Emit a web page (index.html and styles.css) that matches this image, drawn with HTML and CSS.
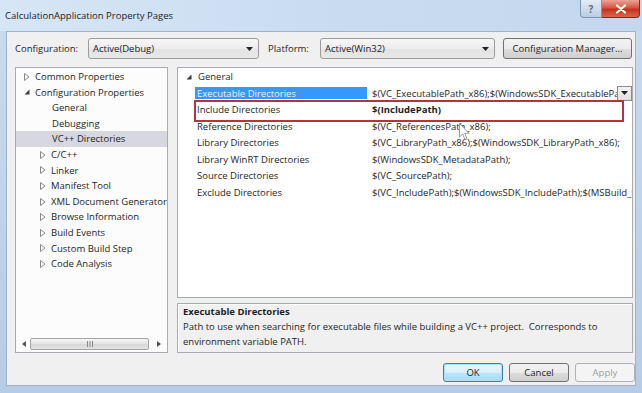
FILE: index.html
```html
<!DOCTYPE html>
<html>
<head>
<meta charset="utf-8">
<link rel="stylesheet" href="styles.css">
</head>
<body>
<div class="window">
  <div class="titlebar">
    <span class="title">CalculationApplication Property Pages</span>
    <div class="caption">
      <span class="cap-help">?</span>
      <span class="cap-close"><svg width="12" height="10" viewBox="0 0 12 10"><path d="M2 1.5 L10 8.5 M10 1.5 L2 8.5" stroke="#fff" stroke-width="2.2" stroke-linecap="round"/></svg></span>
    </div>
  </div>
  <div class="client">
    <div class="config-row">
      <span class="lbl lbl-config">Configuration:</span>
      <div class="combo combo-config"><span>Active(Debug)</span><svg class="dd" width="7" height="4" viewBox="0 0 7 4"><path d="M0 0 H7 L3.5 4 Z" fill="#222"/></svg></div>
      <span class="lbl lbl-platform">Platform:</span>
      <div class="combo combo-platform"><span>Active(Win32)</span><svg class="dd" width="7" height="4" viewBox="0 0 7 4"><path d="M0 0 H7 L3.5 4 Z" fill="#222"/></svg></div>
      <div class="btn btn-cm">Configuration Manager...</div>
    </div>
    <div class="main">
      <div class="tree">
        <div class="tree-items">
          <div class="node lvl0"><svg class="exp" width="6" height="8" viewBox="0 0 6 8"><path d="M0.5 0.5 L5 4 L0.5 7.5 Z" fill="none" stroke="#888" stroke-width="1"/></svg>Common Properties</div>
          <div class="node lvl0"><svg class="exp" width="6" height="8" viewBox="0 0 6 8"><path d="M5.5 1.5 V6.5 H0.5 Z" fill="#3c3c3c"/></svg>Configuration Properties</div>
          <div class="node lvl1">General</div>
          <div class="node lvl1">Debugging</div>
          <div class="node lvl1 sel">VC++ Directories</div>
          <div class="node lvl1x"><svg class="exp" width="6" height="8" viewBox="0 0 6 8"><path d="M0.5 0.5 L5 4 L0.5 7.5 Z" fill="none" stroke="#888" stroke-width="1"/></svg>C/C++</div>
          <div class="node lvl1x"><svg class="exp" width="6" height="8" viewBox="0 0 6 8"><path d="M0.5 0.5 L5 4 L0.5 7.5 Z" fill="none" stroke="#888" stroke-width="1"/></svg>Linker</div>
          <div class="node lvl1x"><svg class="exp" width="6" height="8" viewBox="0 0 6 8"><path d="M0.5 0.5 L5 4 L0.5 7.5 Z" fill="none" stroke="#888" stroke-width="1"/></svg>Manifest Tool</div>
          <div class="node lvl1x"><svg class="exp" width="6" height="8" viewBox="0 0 6 8"><path d="M0.5 0.5 L5 4 L0.5 7.5 Z" fill="none" stroke="#888" stroke-width="1"/></svg>XML Document Generator</div>
          <div class="node lvl1x"><svg class="exp" width="6" height="8" viewBox="0 0 6 8"><path d="M0.5 0.5 L5 4 L0.5 7.5 Z" fill="none" stroke="#888" stroke-width="1"/></svg>Browse Information</div>
          <div class="node lvl1x"><svg class="exp" width="6" height="8" viewBox="0 0 6 8"><path d="M0.5 0.5 L5 4 L0.5 7.5 Z" fill="none" stroke="#888" stroke-width="1"/></svg>Build Events</div>
          <div class="node lvl1x"><svg class="exp" width="6" height="8" viewBox="0 0 6 8"><path d="M0.5 0.5 L5 4 L0.5 7.5 Z" fill="none" stroke="#888" stroke-width="1"/></svg>Custom Build Step</div>
          <div class="node lvl1x"><svg class="exp" width="6" height="8" viewBox="0 0 6 8"><path d="M0.5 0.5 L5 4 L0.5 7.5 Z" fill="none" stroke="#888" stroke-width="1"/></svg>Code Analysis</div>
        </div>
        <div class="hscroll">
          <svg class="sarrow" width="4" height="6" viewBox="0 0 4 6"><path d="M4 0 V6 L0 3 Z" fill="#555"/></svg>
          <div class="thumb"><svg width="8" height="6" viewBox="0 0 8 6"><path d="M1.5 0 V6 M4 0 V6 M6.5 0 V6" stroke="#8a8a8a" stroke-width="1"/></svg></div>
          <svg class="sarrow" width="4" height="6" viewBox="0 0 4 6"><path d="M0 0 V6 L4 3 Z" fill="#555"/></svg>
        </div>
      </div>
      <div class="right">
        <div class="grid">
          <div class="cat"><svg class="exp" width="6" height="8" viewBox="0 0 6 8"><path d="M5.5 1.5 V6.5 H0.5 Z" fill="#3c3c3c"/></svg>General</div>
          <div class="row selrow"><span class="name">Executable Directories</span><span class="val">$(VC_ExecutablePath_x86);$(WindowsSDK_ExecutablePath</span><span class="ddbtn"><svg width="7" height="4" viewBox="0 0 7 4"><path d="M0 0 H7 L3.5 4 Z" fill="#222"/></svg></span></div>
          <div class="row"><span class="name">Include Directories</span><span class="val bold">$(IncludePath)</span></div>
          <div class="row"><span class="name">Reference Directories</span><span class="val">$(VC_ReferencesPath_x86);</span></div>
          <div class="row"><span class="name">Library Directories</span><span class="val">$(VC_LibraryPath_x86);$(WindowsSDK_LibraryPath_x86);</span></div>
          <div class="row"><span class="name">Library WinRT Directories</span><span class="val">$(WindowsSDK_MetadataPath);</span></div>
          <div class="row"><span class="name">Source Directories</span><span class="val">$(VC_SourcePath);</span></div>
          <div class="row"><span class="name">Exclude Directories</span><span class="val">$(VC_IncludePath);$(WindowsSDK_IncludePath);$(MSBuild_Executable</span></div>
          <div class="redbox"></div>
          <svg class="cursor" width="12" height="18" viewBox="0 0 12 18"><path d="M0.5 0.5 V14 L3.6 11 L6 16.5 L8 15.6 L5.7 10.3 H10 Z" fill="#fff" stroke="#9a9a9a" stroke-width="1" stroke-linejoin="round"/></svg>
        </div>
        <div class="desc">
          <div class="desc-title">Executable Directories</div>
          <div class="desc-text">Path to use when searching for executable files while building a VC++ project.&nbsp; Corresponds to environment variable PATH.</div>
        </div>
      </div>
    </div>
    <div class="buttons">
      <div class="btn btn-ok">OK</div>
      <div class="btn">Cancel</div>
      <div class="btn btn-disabled">Apply</div>
    </div>
  </div>
</div>
</body>
</html>
```

FILE: styles.css
```css
* { box-sizing: border-box; }
html, body { margin: 0; padding: 0; }
body {
  font-family: "Open Sans", "Noto Sans", sans-serif;
  font-size: 9.5px;
  color: #1b1b1b;
  background: #b9cfe8;
}
.window {
  width: 642px;
  height: 393px;
  display: flex;
  flex-direction: column;
  background: linear-gradient(to bottom, #c9dbef, #b6cce6);
  overflow: hidden;
}
.titlebar {
  height: 31px;
  display: flex;
  align-items: flex-start;
  background: linear-gradient(to right, #d7e6f6 0%, #c9dcf1 50%, #c3d7ee 100%);
  flex-shrink: 0;
}
.title {
  margin: 9px 0 0 5px;
  font-size: 9.5px;
  color: #222;
}
.caption {
  margin-left: auto;
  display: flex;
  margin-right: 2px;
  flex-shrink: 0;
}
.cap-help {
  width: 22px;
  height: 18px;
  flex-shrink: 0;
  border: 1px solid #7f95ae;
  border-top: none;
  border-radius: 0 0 0 4px;
  background: linear-gradient(#e3ecf6, #bccde1);
  color: #5a6b80;
  font-size: 10px;
  font-weight: bold;
  display: flex;
  align-items: center;
  justify-content: center;
}
.cap-close {
  width: 38px;
  height: 18px;
  flex-shrink: 0;
  border: 1px solid #7a2a26;
  border-top: none;
  border-left: none;
  border-radius: 0 0 4px 0;
  background: linear-gradient(#eba498 0%, #d9563f 45%, #c3321d 55%, #d8674c 100%);
  display: flex;
  align-items: center;
  justify-content: center;
}
.client {
  margin: 0 6px 0 6px;
  height: 355px;
  background: #f0f0f0;
  border: 1px solid #9fb2c8;
  padding: 6px 0 0 8px;
  display: flex;
  flex-direction: column;
}
.config-row {
  display: flex;
  align-items: center;
  height: 21px;
}
.lbl { color: #1e1e1e; }
.lbl-config { width: 73px; }
.lbl-platform { width: 52px; margin-left: 9px; }
.combo {
  height: 21px;
  border: 1px solid #9a9a9a;
  border-radius: 3px;
  background: linear-gradient(#f7f7f7, #ececec 50%, #e2e2e2 51%, #e8e8e8);
  display: flex;
  align-items: center;
  padding: 0 5px 0 4px;
}
.combo span { flex: 1; }
.combo-config { width: 171px; }
.combo-platform { width: 175px; }
.btn {
  height: 19px;
  border: 1px solid #707070;
  border-radius: 3px;
  background: linear-gradient(#f2f2f2, #ebebeb 50%, #dddddd 51%, #cfcfcf);
  display: flex;
  align-items: center;
  justify-content: center;
  color: #1e1e1e;
}
.btn-cm { width: 129px; height: 21px; margin-left: 8px; }
.main {
  display: flex;
  margin-top: 8px;
  gap: 9px;
}
.tree {
  width: 153px;
  height: 286px;
  border: 1px solid #a8abb2;
  background: #fcfcfc;
  display: flex;
  flex-direction: column;
}
.tree-items {
  flex: 1;
  padding-top: 1px;
}
.node {
  height: 15.6px;
  line-height: 15.6px;
  white-space: nowrap;
  display: flex;
  align-items: center;
  overflow: hidden;
  color: #1e1e1e;
}
.node .exp { margin-right: 5px; flex-shrink: 0; }
.lvl0 { padding-left: 8px; }
.lvl1 { padding-left: 36px; }
.lvl1x { padding-left: 24px; }
.sel { background: #d7d7e0; }
.hscroll {
  height: 13px;
  margin: 0 1px 2px 1px;
  display: flex;
  align-items: center;
  padding: 0 5px;
}
.hscroll .thumb {
  flex: 1;
  height: 12px;
  margin: 0 8px 0 4px;
  border: 1px solid #a3a3a3;
  border-radius: 2px;
  background: linear-gradient(#f6f6f6, #e2e2e2 50%, #d6d6d6 51%, #e3e3e3);
  display: flex;
  align-items: center;
  justify-content: center;
}
.right {
  width: 456px;
  display: flex;
  flex-direction: column;
  gap: 5px;
}
.grid {
  position: relative;
  height: 231px;
  border: 1px solid #a8abb2;
  background: #fff;
  overflow: hidden;
}
.cat {
  height: 17px;
  display: flex;
  align-items: center;
  padding-left: 8px;
  color: #1e1e1e;
}
.cat .exp { margin-right: 6px; }
.row {
  height: 16.5px;
  display: flex;
  align-items: center;
  padding-left: 17px;
  white-space: nowrap;
}
.row .name {
  width: 172px;
  flex-shrink: 0;
  padding-left: 2px;
  height: 100%;
  display: flex;
  align-items: center;
  color: #1e1e1e;
}
.row .val {
  flex: 1;
  min-width: 0;
  padding-left: 5px;
  overflow: hidden;
  color: #1e1e1e;
}
.val.bold { font-weight: bold; }
.selrow .name {
  background: #3399ff;
  color: #eaf3ff;
  height: 12px;
}
.ddbtn {
  width: 15px;
  height: 15px;
  flex-shrink: 0;
  border: 1px solid #8a8a8a;
  background: linear-gradient(#f4f4f4, #dedede);
  display: flex;
  align-items: center;
  justify-content: center;
}
.redbox {
  position: absolute;
  left: 16px;
  top: 32px;
  width: 430px;
  height: 22px;
  border: 2px solid #b8323c;
}
.cursor {
  position: absolute;
  left: 281px;
  top: 55px;
}
.desc {
  height: 50px;
  border: 1px solid #a8abb2;
  box-shadow: inset 1px 1px 0 #fff;
  background: #f0f0f0;
  padding: 0 5px;
  line-height: 15px;
}
.desc-title { font-weight: bold; color: #1e1e1e; }
.desc-text { color: #1e1e1e; width: 420px; }
.buttons {
  display: flex;
  justify-content: flex-end;
  gap: 6px;
  margin-top: 10px;
}
.buttons .btn { width: 60px; }
.btn-ok {
  border-color: #3c7fb1;
  box-shadow: inset 0 0 0 1px #aee0f8;
  background: linear-gradient(#eaf6fd, #d9f0fc 50%, #bee6fd 51%, #a7d9f5);
}
.btn-disabled {
  border-color: #adb2b5;
  background: #f4f4f4;
  color: #a0a0a0;
}
```
